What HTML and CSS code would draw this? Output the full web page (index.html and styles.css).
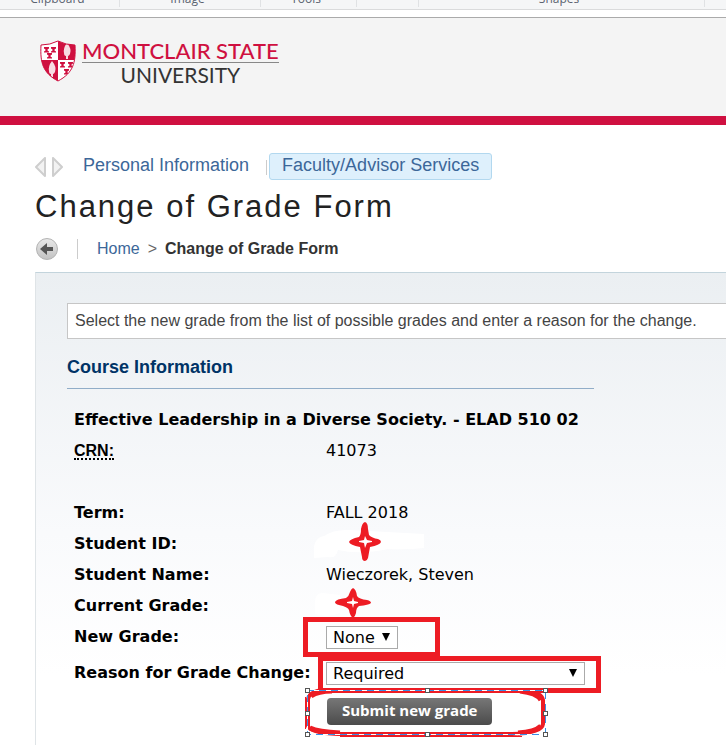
FILE: index.html
```html
<!DOCTYPE html>
<html lang="en">
<head>
<meta charset="utf-8">
<title>Change of Grade Form</title>
<link rel="stylesheet" href="styles.css">
</head>
<body>
<div class="ribbon">
  <span>Clipboard</span><span>Image</span><span>Tools</span><span></span><span>Shapes</span><span></span>
</div>
<header class="banner">
  <svg class="shield" viewBox="0 0 36 42" aria-hidden="true">
    <defs>
      <clipPath id="shape"><path d="M1 5 Q10 5 18 1 Q26 5 35 5 C36 23 33 33 18 41 C3 33 0 23 1 5Z"/></clipPath>
      <path id="spool" d="M0 0h5v1.500l-1.500 1v1l1.500 1v1H0v-1l1.500-1v-1L0 1.500Z"/>
      <path id="pine" d="M4 0 Q9 6 7 11 Q6 13 5 13v3H3v-3Q1 13 1 10 Q0 5 4 0Z"/>
    </defs>
    <g clip-path="url(#shape)">
      <rect width="36" height="42" fill="#fff"/>
      <path d="M18 0h18v20H18ZM0 20h18v22H0Z" fill="#cf1040"/>
      <g fill="#cf1040">
        <use href="#spool" x="4" y="7"/><use href="#spool" x="11" y="7"/><use href="#spool" x="7" y="13"/>
        <use href="#spool" x="20" y="22"/><use href="#spool" x="28" y="22"/><use href="#spool" x="24" y="29"/>
      </g>
      <use href="#pine" x="23" y="3" fill="#f7dce3"/><use href="#pine" x="8" y="21" fill="#f7dce3"/>
    </g>
    <path d="M1 5 Q10 5 18 1 Q26 5 35 5 C36 23 33 33 18 41 C3 33 0 23 1 5Z" fill="none" stroke="#cf1040"/>
  </svg>
  <div class="wordmark">
    <span class="state">MONTCLAIR STATE</span>
    <span class="university">UNIVERSITY</span>
  </div>
</header>

<nav class="tabs">
  <svg class="arrows" viewBox="0 0 28 20" aria-hidden="true">
    <g fill="#f2f2f2" stroke="#cecece" stroke-width="2" stroke-linejoin="round">
      <path d="M10 1v18L1 10Z"/><path d="M18 1v18l9-9Z"/>
    </g>
  </svg>
  <a href="#" class="tab">Personal Information</a>
  <a href="#" class="tab active">Faculty/Advisor Services</a>
</nav>
<h1>Change of Grade Form</h1>
<nav class="crumbs">
  <a href="#" class="back" aria-label="Back">
    <svg viewBox="0 0 24 24">
      <defs><linearGradient id="disc" x2="0" y2="1"><stop stop-color="#e8e8e8"/><stop offset="1" stop-color="#c2c2c2"/></linearGradient></defs>
      <circle cx="12" cy="12" r="10.500" fill="url(#disc)" stroke="#b4b4b4"/>
      <path d="M5 12l7-6v4h6v4h-6v4Z" fill="#555"/>
    </svg>
  </a>
  <a href="#" class="home">Home</a><span class="sep">&gt;</span><strong>Change of Grade Form</strong>
</nav>

<main class="panel">
  <p class="notice">Select the new grade from the list of possible grades and enter a reason for the change.</p>
  <h2>Course Information</h2>
  <form class="course">
    <div class="row name"><b>Effective Leadership in a Diverse Society. - ELAD 510 02</b></div>
    <div class="row"><b><abbr>CRN:</abbr></b><span>41073</span></div>
    <div class="row"></div>
    <div class="row"><b>Term:</b><span>FALL 2018</span></div>
    <div class="row"><b>Student ID:</b>
      <div class="value">
        <svg class="mark id-mark" viewBox="0 0 112 42" aria-hidden="true">
          <path d="M0 25Q2 16 10 15Q20 8 36 9L110 13V27Q92 29 74 28Q45 34 24 29Q22 38 14 36L0 37Z" fill="#fff"/>
          <path d="M51 1Q54 2 54 8L55 14Q58 17 64 18Q67 19 67 21Q66 24 56 26L54 37Q53 40 51 40Q48 40 48 36L46 26Q36 24 35 21Q36 18 45 16Q47 14 47 8Q48 2 51 1Z" fill="#ed1c24"/>
          <path d="M51 15l2 4 5 1v1l-5 1-2 5-1-5-5-1v-1l5-1Z" fill="#fff"/>
        </svg>
      </div>
    </div>
    <div class="row"><b>Student Name:</b><span>Wieczorek, Steven</span></div>
    <div class="row"><b>Current Grade:</b>
      <div class="value">
        <svg class="mark grade-mark" viewBox="0 0 60 32" aria-hidden="true">
          <path d="M1 15Q1 6 9 6L26 8V26Q15 31 1 27Z" fill="#fff"/>
          <path d="M39 1Q42 2 43 9Q45 12 53 13Q57 14 57 16Q55 18 45 19Q42 21 42 26Q41 30 39 31Q36 29 35 23Q34 20 25 18Q21 17 21 15Q22 12 32 11Q35 9 36 5Q37 2 39 1Z" fill="#ed1c24"/>
          <path d="M39 10l1 4 4 1v1l-4 1-1 4-1-4-5-1v-1l5-1Z" fill="#fff"/>
        </svg>
      </div>
    </div>
    <div class="row"><label for="grade">New Grade:</label>
      <div class="value">
        <div class="pick short"><select id="grade"><option>None</option></select></div>
        <i class="frame grade-frame"></i>
      </div>
    </div>
    <div class="row tall"><label for="reason">Reason for Grade Change:</label>
      <div class="value">
        <div class="pick long"><select id="reason"><option>Required</option></select></div>
        <i class="frame reason-frame"></i>
      </div>
    </div>
    <div class="row last">
      <div class="value submit">
        <svg class="mark loop" viewBox="0 0 244 52" aria-hidden="true">
          <path d="M20 3H222Q238 6 239 13V37Q238 46 208 47H34Q6 46 4 39V12Q6 4 20 3Z" fill="none" stroke="#ed1c24" stroke-width="4"/>
          <path d="M7 9Q14 4 28 4M6 41Q14 45 36 46M216 4Q233 6 237 13M214 46Q231 45 237 39" fill="none" stroke="#ed1c24" stroke-width="5"/>
          <g shape-rendering="crispEdges" fill="none">
            <path d="M27 1H211M36 49H218M1 10V42" stroke="#ed1c24"/>
            <path d="M3 3H241V47H3Z" stroke="#fff"/>
            <path d="M3 3H241V47H3Z" stroke="#3a8ee6" stroke-dasharray="7 5"/>
            <path fill="#fff" stroke="#555" d="M1 1h4v4H1ZM121 1h4v4h-4ZM239 1h4v4h-4ZM1 24h4v4H1ZM239 24h4v4h-4ZM1 45h4v4H1ZM121 45h4v4h-4ZM239 45h4v4h-4Z"/>
          </g>
        </svg>
        <button type="button">Submit new grade</button>
      </div>
    </div>
  </form>
</main>
</body>
</html>
```
FILE: styles.css
```css
* { box-sizing: border-box; }
body {
  margin: 0;
  min-height: 100vh;
  display: flex;
  flex-direction: column;
  overflow-x: hidden;
  background: #fff;
  color: #000;
  font: 16px/31px "DejaVu Sans", sans-serif;
}
a { color: #3c6799; text-decoration: none; }

.ribbon {
  display: grid;
  grid-template-columns: 119px 141px 96px 62px 286px 1fr;
  height: 10px;
  overflow: hidden;
  background: #f5f6f7;
  border-bottom: 1px solid #dadbdc;
  font: 12px/16px "Open Sans", sans-serif;
  color: #5a6370;
}
.ribbon span {
  display: flex;
  align-items: flex-end;
  justify-content: center;
  height: 7px;
  padding-right: 4px;
  text-align: center;
  box-shadow: 1px 0 #e0e2e4;
}

.banner {
  display: flex;
  gap: 6px;
  height: 108px;
  margin-top: 7px;
  padding: 22px 40px 0;
  background: #f4f4f4;
  border-top: 1px solid #aaa;
  border-bottom: 9px solid #cf1040;
}
.shield { width: 36px; height: 42px; }
.wordmark { display: flex; flex-direction: column; align-items: center; font-family: Lato, sans-serif; }
.state { color: #cf1040; font-size: 22px; line-height: 22px; border-bottom: 1px solid #888; font-weight: 500; }
.university { color: #333; font-size: 21px; line-height: 24px; }

.tabs {
  display: flex;
  align-items: center;
  margin: 28px 35px 0;
  font: 18px/22px "Liberation Sans", sans-serif;
}
.arrows { width: 28px; height: 20px; margin-right: 20px; }
.tab { padding-bottom: 3px; }
.tab.active {
  position: relative;
  margin-left: 20px;
  padding: 0 12px 3px;
  background: #def0fc;
  border: 1px solid #b2d8ef;
  border-radius: 3px;
}
.tab.active::before { content: ""; position: absolute; left: -4px; top: 6px; height: 15px; border-left: 1px solid #ccc; }
h1 {
  margin: 9px 35px 0;
  font: 31px/36px "Liberation Sans", sans-serif;
  letter-spacing: 2px;
  color: #222;
}
.crumbs {
  display: flex;
  align-items: center;
  margin: 12px 35px 11px;
  font: 16px/24px "Liberation Sans", sans-serif;
  color: #333;
}
.back { display: flex; width: 43px; border-right: 1px solid #ccc; height: 20px; align-items: center; margin-right: 19px; }
.back svg { width: 24px; height: 24px; flex: none; }
.sep { margin: 0 8px; font-size: 16px; color: #666; }

.panel {
  flex: 1;
  margin-left: 35px;
  padding: 30px 0 0 31px;
  border-top: 1px solid #c3d4dc;
  border-left: 1px solid #dfe4e7;
  background: linear-gradient(#ebeff2, #f9fafc 55%, #fff 85%);
}
.notice {
  margin: 0;
  padding: 0 7px;
  border: 1px solid #c6c6c6;
  border-right: 0;
  background: #fff;
  color: #444;
  font: 16px/34px "Liberation Sans", sans-serif;
}
h2 {
  max-width: 527px;
  margin: 12px 0 15px;
  border-bottom: 1px solid #91adc8;
  color: #036;
  font: bold 18px/32px "Liberation Sans", sans-serif;
  padding-bottom: 5px;
}
.course { margin: 0; padding-left: 7px; }
.row { display: grid; grid-template-columns: 252px 1fr; height: 31px; }
.row.name { display: block; white-space: nowrap; }
.row label { font-weight: bold; white-space: nowrap; }
.row.tall { height: 41px; padding-top: 5px; }
.row.last { height: 48px; }
.last .value { grid-column: 2; }
abbr {
  font: bold 16px/14px "Liberation Sans", sans-serif;
  display: inline-block;
  border-bottom: 2px dotted #000;
}
.value { position: relative; }
.mark { position: absolute; }
.id-mark { width: 112px; height: 42px; left: -12px; top: -7px; }
.grade-mark { width: 60px; height: 32px; left: -12px; top: -3px; }
.loop { width: 244px; height: 52px; left: -22px; top: -6px; }

.pick { position: relative; height: 23px; margin-top: 5px; }
.pick.short { width: 72px; }
.pick.long { width: 259px; }
.pick::after {
  content: "";
  position: absolute;
  right: 8px;
  top: 7px;
  border: 4px solid transparent;
  border-top: 8px solid #000;
  border-bottom: 0;
}
select {
  appearance: none;
  display: block;
  width: 100%;
  height: 100%;
  padding: 0 6px;
  border: 1px solid #aaa;
  border-radius: 0;
  background: #fff;
  color: #000;
  font: 16px/21px "DejaVu Sans", sans-serif;
}
.frame { position: absolute; border: 5px solid #ed1c24; pointer-events: none; }
.grade-frame { width: 137px; height: 40px; left: -23px; top: -4px; }
.reason-frame { width: 283px; height: 37px; left: -8px; top: -1px; }
.submit { padding: 5px 0 0 1px; }
button {
  position: relative;
  display: block;
  height: 27px;
  padding: 0 15px 3px;
  border: 0;
  border-radius: 4px;
  background: linear-gradient(#777, #4b4b4b);
  color: #fff;
  font: bold 15px/24px "Open Sans", sans-serif;
}
```
